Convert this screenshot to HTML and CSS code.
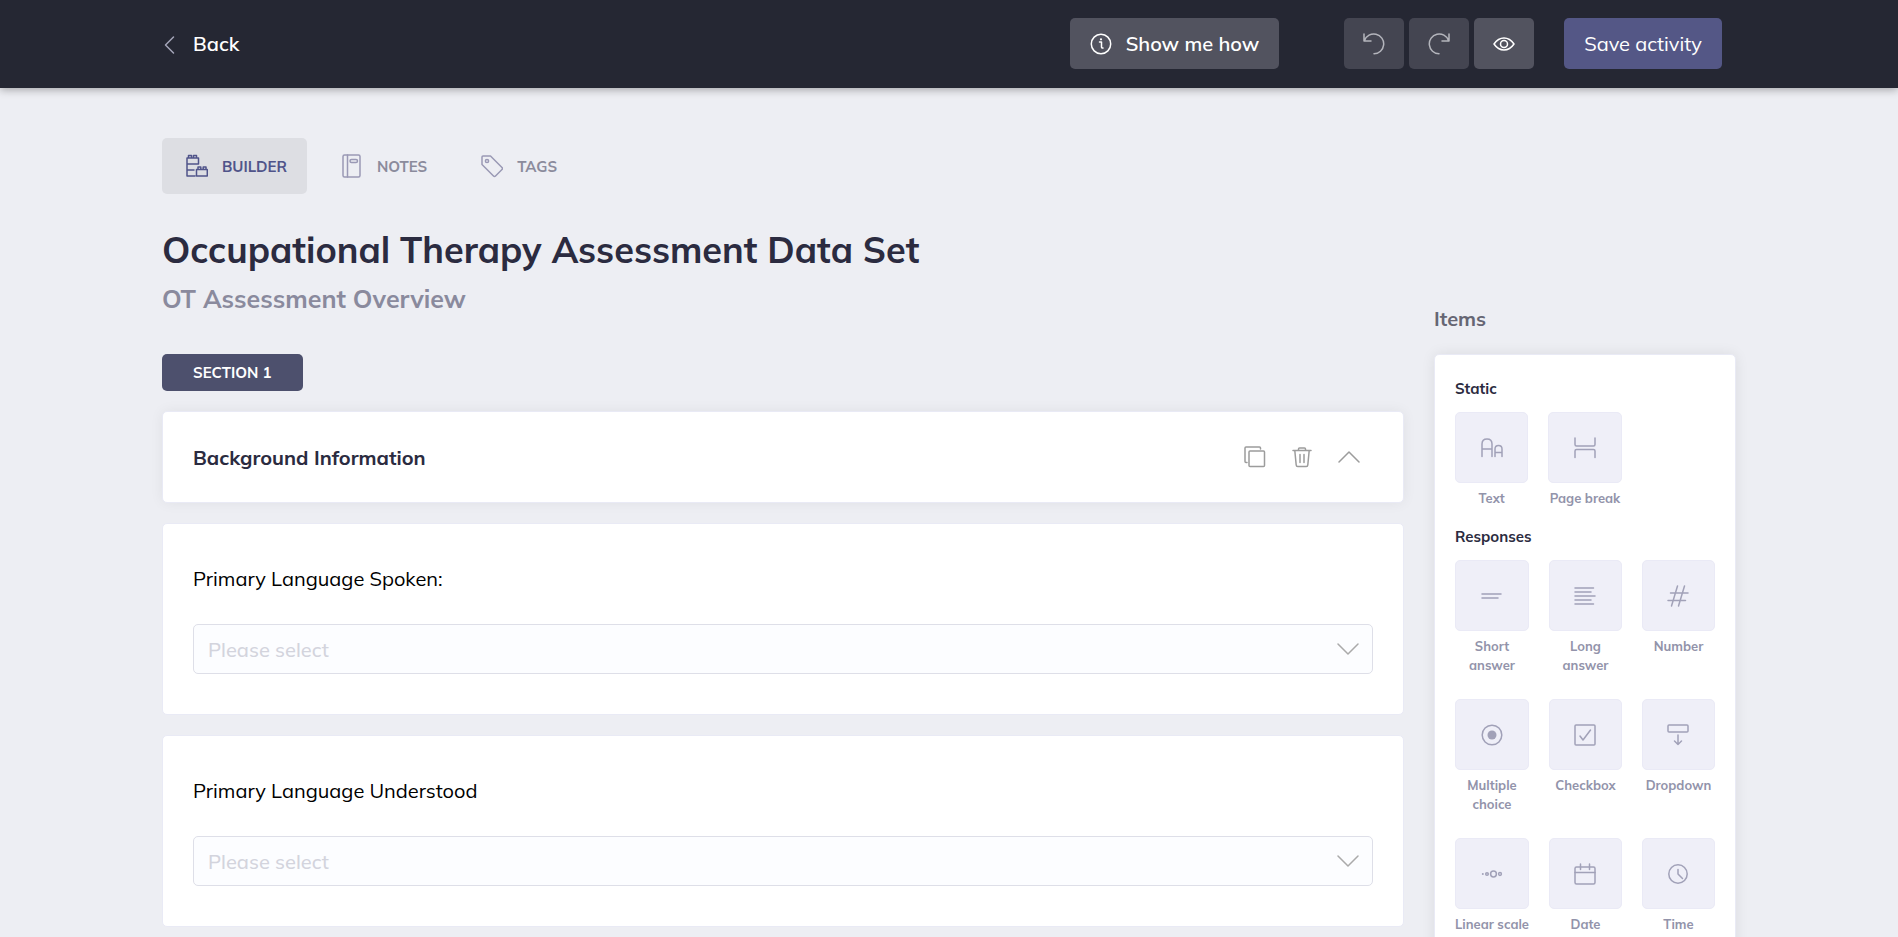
FILE: index.html
```html
<!DOCTYPE html>
<html lang="en">
<head>
    <meta charset="UTF-8">
    <meta name="viewport" content="width=device-width, initial-scale=1.0">
    <title>Activity builder</title>
    <link rel="stylesheet" href="styles.css">
</head>
<body>
    <header class="topbar">
        <div class="topbar-inner">
            <a class="back" href="#">
                <svg class="back-icon" viewBox="0 0 10 18"><path d="M9.500 2L1.500 10l8 8"/></svg>
                Back
            </a>
            <div class="actions">
                <button class="btn btn-help" type="button">
                    <svg class="icon" viewBox="0 0 22 22"><circle cx="11" cy="11" r="9.700"/><path d="M9.500 9h2v5q0 1.200 1.500 1"/><circle class="solid" cx="11" cy="6.300" r="1.100"/></svg>
                    Show me how
                </button>
                <div class="btn-group">
                    <button class="btn btn-icon btn-dim" type="button" aria-label="Undo">
                        <svg class="icon" viewBox="0 0 22 22"><path d="M1 1v7h7M1.500 7.500A9.900 9.900 0 1 1 11 20.800"/></svg>
                    </button>
                    <button class="btn btn-icon btn-dim" type="button" aria-label="Redo">
                        <svg class="icon" viewBox="0 0 22 22"><path d="M21 1v7h-7M20.500 7.500A9.900 9.900 0 1 0 11 20.800"/></svg>
                    </button>
                    <button class="btn btn-icon" type="button" aria-label="Preview">
                        <svg class="icon" viewBox="0 0 22 22"><path d="M1 11c5.500-8 14.500-8 20 0-5.500 8-14.500 8-20 0z"/><circle cx="11" cy="11" r="3.500"/></svg>
                    </button>
                </div>
                <button class="btn btn-save" type="button">Save activity</button>
            </div>
        </div>
    </header>

    <main class="page">
        <nav class="tabs">
            <a class="tab active" href="#">
                <svg class="icon" viewBox="0 0 22 24"><path d="M12.500 10V4H1v18h8M1 10h11.500M1 16h7M2.500 4V1.500h3V4M7.500 4V1.500h3V4M10.500 15.500h10.800V22H10.500zM12 15.500V13h2.800v2.500M17.200 15.500V13H20v2.500"/></svg>
                BUILDER
            </a>
            <a class="tab" href="#">
                <svg class="icon" viewBox="0 0 22 24"><rect x="2" y="1" width="17" height="22" rx="1.500"/><path d="M6.500 1v22"/><rect x="9" y="5.500" width="7.500" height="3" rx="1.500"/></svg>
                NOTES
            </a>
            <a class="tab" href="#">
                <svg class="icon" viewBox="0 0 22 24"><path d="M2 2h7.500L21 13.500q1 1 0 2L14.500 22q-1 1-2 0L1 10.500V3q0-1 1-1z"/><circle cx="6" cy="7" r="1.600"/></svg>
                TAGS
            </a>
        </nav>

        <div class="columns">
            <section class="builder">
                <h1>Occupational Therapy Assessment Data Set</h1>
                <h2>OT Assessment Overview</h2>
                <span class="badge">SECTION 1</span>

                <div class="card card-head">
                    <h3>Background Information</h3>
                    <div class="card-tools">
                        <button type="button" aria-label="Duplicate">
                            <svg class="icon" viewBox="0 0 22 22"><rect x="5" y="5" width="15.500" height="15.500" rx="1"/><path d="M3 16.500H2q-1 0-1-1V2q0-1 1-1h13.500q1 0 1 1v1"/></svg>
                        </button>
                        <button type="button" aria-label="Delete">
                            <svg class="icon" viewBox="0 0 22 22"><path d="M2 4.500h18M3.800 4.500L5.200 19q.1 1.500 1.500 1.500h8.600q1.400 0 1.500-1.500l1.400-14.500M7.500 4.500V3q0-1 1-1h5q1 0 1 1v1.500M9 8.500v8M13 8.500v8"/></svg>
                        </button>
                        <button type="button" aria-label="Collapse">
                            <svg class="icon" viewBox="0 0 22 22"><path d="M1 16L11 6l10 10"/></svg>
                        </button>
                    </div>
                </div>

                <div class="card card-question">
                    <label for="spoken">Primary Language Spoken:</label>
                    <div class="select">
                        <select id="spoken"><option>Please select</option></select>
                        <svg class="icon" viewBox="0 0 22 22"><path d="M1 6l10 10L21 6"/></svg>
                    </div>
                </div>

                <div class="card card-question">
                    <label for="understood">Primary Language Understood</label>
                    <div class="select">
                        <select id="understood"><option>Please select</option></select>
                        <svg class="icon" viewBox="0 0 22 22"><path d="M1 6l10 10L21 6"/></svg>
                    </div>
                </div>
            </section>

            <aside class="sidebar">
                <h2>Items</h2>
                <div class="panel">
                    <h3>Static</h3>
                    <div class="items items-static">
                        <button class="item" type="button">
                            <span class="tile"><svg class="icon" viewBox="0 0 22 22"><path d="M1 19.500V7q0-5 5-5t5 5v12.500M1 12h10M14 19.500V12q0-3.500 3.500-3.500T21 12v7.500M14 15.500h7"/></svg></span>
                            Text
                        </button>
                        <button class="item" type="button">
                            <span class="tile"><svg class="icon" viewBox="0 0 22 22"><path d="M1 1v6.500q0 1.500 1.500 1.500h17q1.500 0 1.500-1.500V1M1 20.500V14q0-1.500 1.500-1.500h17q1.500 0 1.500 1.500v6.500"/></svg></span>
                            Page break
                        </button>
                    </div>

                    <h3>Responses</h3>
                    <div class="items">
                        <button class="item" type="button">
                            <span class="tile"><svg class="icon" viewBox="0 0 22 22"><path d="M1 9h19M1 13h16"/></svg></span>
                            Short answer
                        </button>
                        <button class="item" type="button">
                            <span class="tile"><svg class="icon" viewBox="0 0 22 22"><path d="M1 3h18.500M1 7h16M1 11h20M1 15h16M1 19h18.500"/></svg></span>
                            Long answer
                        </button>
                        <button class="item" type="button">
                            <span class="tile"><svg class="icon" viewBox="0 0 22 22"><path d="M10.500 1l-6 20M17.500 1l-6 20M3.500 8H21M1 15.500h17.500"/></svg></span>
                            Number
                        </button>
                        <button class="item" type="button">
                            <span class="tile"><svg class="icon" viewBox="0 0 22 22"><circle cx="11" cy="11" r="9.800"/><circle class="solid" cx="11" cy="11" r="4.500"/></svg></span>
                            Multiple choice
                        </button>
                        <button class="item" type="button">
                            <span class="tile"><svg class="icon" viewBox="0 0 22 22"><rect x="1" y="1" width="20" height="20" rx="1"/><path d="M6 12l3 4 7.500-10"/></svg></span>
                            Checkbox
                        </button>
                        <button class="item" type="button">
                            <span class="tile"><svg class="icon" viewBox="0 0 22 22"><rect x="1" y="1" width="20" height="7" rx="1"/><path d="M11 11v9.500M7.500 17l3.500 3.500 3.500-3.500"/></svg></span>
                            Dropdown
                        </button>
                        <button class="item" type="button">
                            <span class="tile"><svg class="icon" viewBox="0 0 22 22"><circle class="solid" cx="1.800" cy="11" r="1"/><circle cx="6" cy="11" r="1.300"/><circle cx="12.500" cy="11" r="2.900"/><circle cx="19" cy="11" r="1.400"/></svg></span>
                            <span class="nowrap">Linear scale</span>
                        </button>
                        <button class="item" type="button">
                            <span class="tile"><svg class="icon" viewBox="0 0 22 22"><rect x="1" y="4" width="20" height="17" rx="1.500"/><path d="M1 9.500h20M6.500 1v5.500M15.500 1v5.500"/></svg></span>
                            Date
                        </button>
                        <button class="item" type="button">
                            <span class="tile"><svg class="icon" viewBox="0 0 22 22"><circle cx="11" cy="11" r="9.200"/><path d="M11 6.500V11l4.500 4.500"/></svg></span>
                            Time
                        </button>
                    </div>
                </div>
            </aside>
        </div>
    </main>
</body>
</html>
```
FILE: styles.css
```css
* {
    box-sizing: border-box;
}
body {
    margin: 0;
    background-color: #edeef3;
    color: #2b2b40;
    font-family: Muli, Mulish, Lato, sans-serif;
    font-size: 20px;
}
h1, h2, h3 {
    margin: 0;
}
button, select {
    font: inherit;
}
button {
    border: 0;
    padding: 0;
    background: none;
    cursor: pointer;
}
a {
    color: inherit;
    text-decoration: none;
}
.icon, .back-icon {
    flex: none;
    width: 22px;
    height: 22px;
    fill: none;
    stroke: currentColor;
    stroke-width: 1.5;
    stroke-linecap: round;
    stroke-linejoin: round;
}
.solid {
    fill: currentColor;
    stroke: none;
}

/* top bar */
.topbar {
    position: relative;
    background-color: #252733;
    box-shadow: 0 2px 8px rgba(0, 0, 0, 0.3);
    color: #fff;
}
.topbar-inner {
    display: flex;
    align-items: center;
    justify-content: space-between;
    max-width: 1574px;
    height: 88px;
    margin: 0 auto;
    padding: 0 14px 1px 0;
}
.back {
    display: flex;
    align-items: center;
    gap: 19px;
    padding-left: 2px;
    font-weight: 600;
}
.back-icon {
    width: 10px;
    height: 18px;
    color: #a5a6ba;
    overflow: visible;
}
.actions {
    display: flex;
    gap: 30px;
}
.btn {
    display: flex;
    align-items: center;
    justify-content: center;
    height: 51px;
    padding: 0 20px;
    border-radius: 5px;
    background-color: #52535f;
    color: #fff;
}
.btn-help {
    gap: 14px;
    margin-right: 35px;
    font-weight: 600;
}
.btn-group {
    display: flex;
    gap: 5px;
}
.btn-icon {
    width: 60px;
    padding: 0;
}
.btn-dim {
    background-color: #444551;
    color: #b4b5bc;
}
.btn-save {
    background-color: #545786;
}

/* page */
.page {
    max-width: 1574px;
    margin: 0 auto;
    padding-top: 50px;
}
.tabs {
    display: flex;
    gap: 10px;
}
.tab {
    display: flex;
    align-items: center;
    gap: 14px;
    height: 56px;
    padding: 0 20px 0 24px;
    border-radius: 5px;
    color: #8b8b9c;
    font-size: 15px;
    font-weight: 700;
}
.tab .icon {
    height: 24px;
    color: #9a99b5;
}
.tab.active, .tab.active .icon {
    color: #50548a;
}
.tab.active {
    background-color: #dddee3;
}
.columns {
    display: grid;
    grid-template-columns: minmax(0, 1fr) 302px;
    gap: 30px;
    align-items: start;
}
.builder h1 {
    padding-top: 30px;
    font-size: 36px;
    line-height: 52px;
}
.builder h2 {
    margin: 5px 0 37px;
    color: #8a8a9d;
    font-size: 25px;
    line-height: 36px;
}
.badge {
    display: block;
    width: fit-content;
    padding: 0 31px;
    border-radius: 5px;
    background-color: #4d506d;
    color: #fff;
    font-size: 15px;
    font-weight: 700;
    line-height: 37px;
}
.card {
    margin-top: 20px;
    padding: 0 30px;
    border: 1px solid #e9eaf5;
    border-radius: 5px;
    background-color: #fff;
}
.card-head {
    display: flex;
    align-items: center;
    justify-content: space-between;
    height: 92px;
    box-shadow: 0 0 14px rgba(0, 0, 0, 0.06);
}
.card-head h3 {
    font-size: 20px;
}
.card-tools {
    display: flex;
    gap: 25px;
    padding-right: 13px;
    color: #9c9c9c;
}
.card-tools button {
    display: flex;
    color: inherit;
}
.card-question {
    padding-top: 40px;
    padding-bottom: 40px;
    color: #000;
}
.card-question label {
    display: block;
    margin-bottom: 30px;
    line-height: 30px;
}
.select {
    display: grid;
    align-items: center;
}
.select > * {
    grid-area: 1 / 1;
}
.select select {
    appearance: none;
    width: 100%;
    height: 50px;
    padding: 0 14px;
    border: 1px solid #dedfe8;
    border-radius: 5px;
    background-color: #fcfdff;
    color: #d3d4dd;
    font-weight: 500;
}
.select .icon {
    justify-self: end;
    margin-right: 14px;
    color: #aaa;
    pointer-events: none;
}

/* sidebar */
.sidebar h2 {
    padding: 110px 0 20px;
    color: #666673;
    font-size: 20px;
    line-height: 30px;
}
.panel {
    padding: 20px;
    border: 1px solid #e9eaf5;
    border-radius: 5px;
    background-color: #fff;
    box-shadow: 0 0 14px rgba(0, 0, 0, 0.08);
}
.panel h3 {
    margin-bottom: 9px;
    font-size: 15px;
    line-height: 28px;
}
.items {
    display: grid;
    grid-template-columns: repeat(3, 1fr);
    gap: 24px 20px;
}
.items-static {
    margin-bottom: 15px;
}
.item {
    display: flex;
    flex-direction: column;
    align-items: center;
    justify-content: start;
    color: #9293aa;
    font-size: 13px;
    font-weight: 700;
    line-height: 19px;
}
.tile {
    display: flex;
    align-items: center;
    justify-content: center;
    width: 100%;
    height: 71px;
    margin-bottom: 6px;
    border: 1px solid #eaeaf6;
    border-radius: 5px;
    background-color: #efeff8;
    color: #a1a1b8;
}
.nowrap {
    white-space: nowrap;
}
```
